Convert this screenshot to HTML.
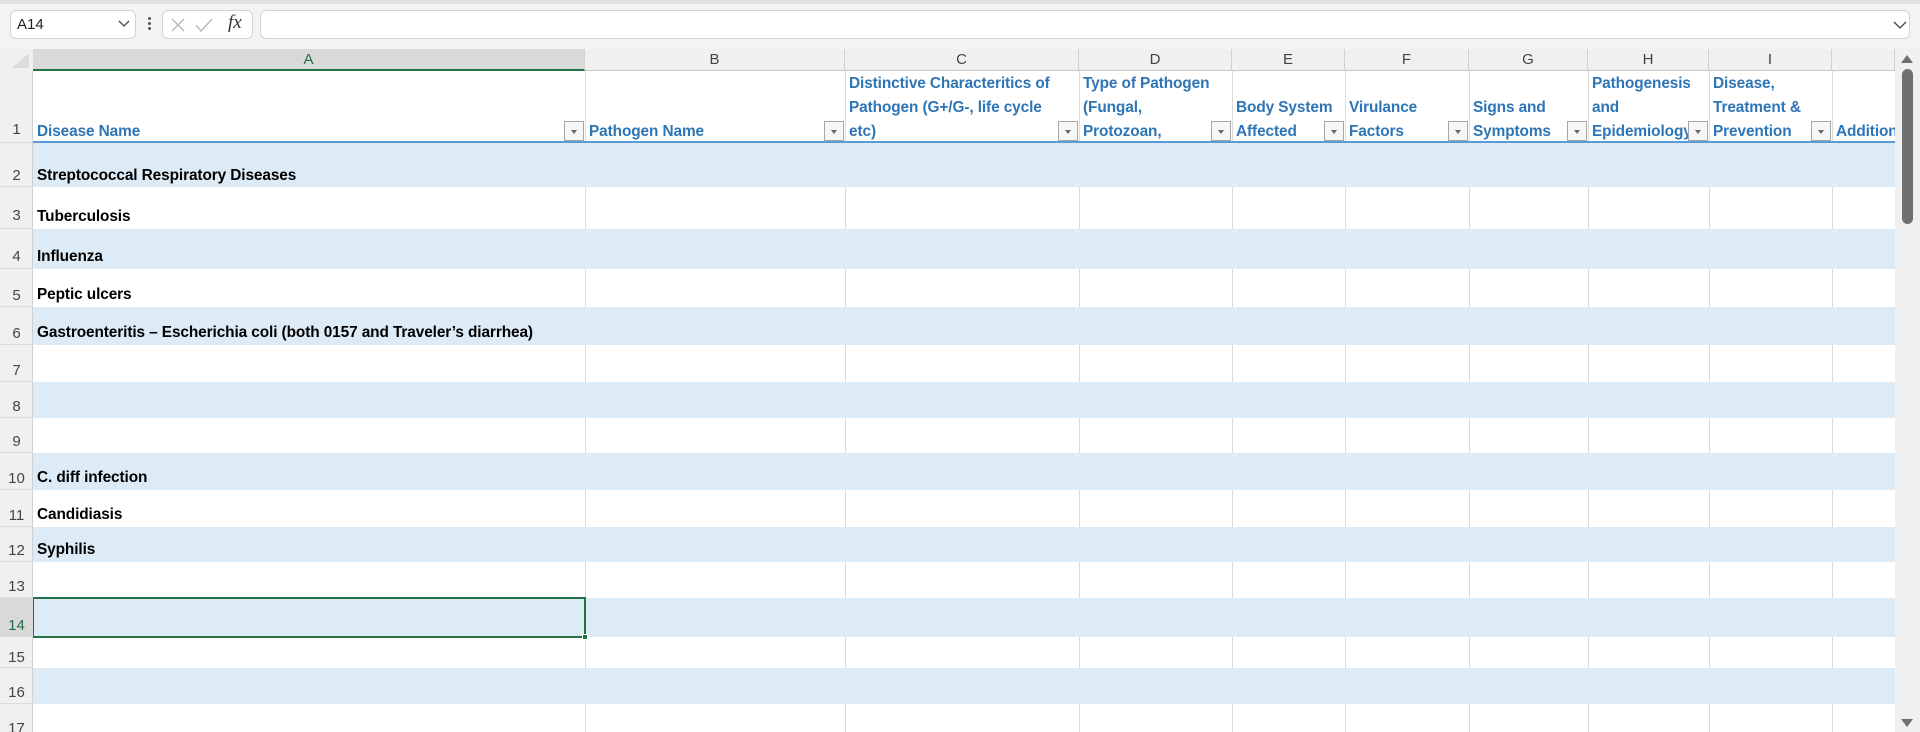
<!DOCTYPE html>
<html><head><meta charset="utf-8"><style>
*{margin:0;padding:0;box-sizing:border-box}
html,body{width:1920px;height:732px;overflow:hidden}
body{background:#f3f3f3;font-family:"Liberation Sans",sans-serif;position:relative}
.a{position:absolute}
.topline{left:0;top:0;width:1920px;height:4px;background:#e0e0e0}
.box{background:#fff;border:1px solid #d4d4d4;border-radius:6px}
.grid{left:33px;top:71px;width:1862px;height:661px;background:#fff;overflow:hidden}
.vl{position:absolute;top:0;width:1px;height:661px;background:#dadada}
.row{position:absolute;left:0;width:1862px;background:#ddebf7}
.rn{position:absolute;left:0;width:33px;text-align:center;font-size:15px;color:#444;border-bottom:1px solid #dcdcdc}
.ch{position:absolute;top:49px;height:22px;text-align:center;font-size:15px;color:#444;line-height:22px;border-right:1px solid #d0d0d0;background:#f0f0f0;border-bottom:1px solid #c6c6c6}
.t{position:absolute;left:4px;font-weight:bold;font-size:15.4px;color:#000;white-space:nowrap;letter-spacing:-0.1px}
.h{position:absolute;font-weight:bold;font-size:15.4px;color:#2e75b6;line-height:24px;white-space:nowrap;overflow:hidden;letter-spacing:-0.1px}
.f{position:absolute;width:20px;height:20px;border:1px solid #a6a6a6;background:#f7f7f7;top:50px}
.f:after{content:"";position:absolute;left:6px;top:8px;border-left:3.5px solid transparent;border-right:3.5px solid transparent;border-top:4px solid #666}
</style></head><body>
<div class="a topline"></div>
<div class="a box" style="left:10px;top:10px;width:126px;height:29px"></div>
<div class="a" style="left:17px;top:16px;font-size:15px;color:#222">A14</div>
<svg class="a" style="left:118px;top:20px" width="12" height="8"><path d="M1 1 L6 6 L11 1" stroke="#444" fill="none" stroke-width="1.3"/></svg>
<div class="a" style="left:148px;top:17px;width:3px;height:3px;background:#555;border-radius:2px;box-shadow:0 5px 0 #555,0 10px 0 #555"></div>
<div class="a box" style="left:162px;top:10px;width:91px;height:29px"></div>
<svg class="a" style="left:170px;top:17px" width="16" height="16"><path d="M2 2 L14 14 M14 2 L2 14" stroke="#b5b5b5" stroke-width="1.3"/></svg>
<svg class="a" style="left:195px;top:17px" width="18" height="16"><path d="M1 8 L6 14 L17 2" stroke="#b5b5b5" fill="none" stroke-width="1.3"/></svg>
<div class="a" style="left:228px;top:12px;font-family:'Liberation Serif',serif;font-style:italic;font-size:19px;color:#333">fx</div>
<div class="a box" style="left:260px;top:10px;width:1650px;height:29px"></div>
<svg class="a" style="left:1893px;top:21px" width="14" height="8"><path d="M1 1 L7 7 L13 1" stroke="#444" fill="none" stroke-width="1.3"/></svg>

<div class="a" style="left:0;top:49px;width:33px;height:22px;background:#f0f0f0"></div>
<svg class="a" style="left:10px;top:52px" width="20" height="17"><path d="M19 1 L19 16 L2 16 Z" fill="#dcdcdc"/></svg>
<div class="ch" style="left:33px;width:552px;background:#d9d9d9;color:#1e7145;border-bottom:2px solid #217346">A</div>
<div class="ch" style="left:585px;width:260px">B</div>
<div class="ch" style="left:845px;width:234px">C</div>
<div class="ch" style="left:1079px;width:153px">D</div>
<div class="ch" style="left:1232px;width:113px">E</div>
<div class="ch" style="left:1345px;width:124px">F</div>
<div class="ch" style="left:1469px;width:119px">G</div>
<div class="ch" style="left:1588px;width:121px">H</div>
<div class="ch" style="left:1709px;width:123px">I</div>
<div class="ch" style="left:1832px;width:63px"></div>

<div class="a grid">
<div class="vl" style="left:552px"></div><div class="vl" style="left:812px"></div><div class="vl" style="left:1046px"></div><div class="vl" style="left:1199px"></div><div class="vl" style="left:1312px"></div><div class="vl" style="left:1436px"></div><div class="vl" style="left:1555px"></div><div class="vl" style="left:1676px"></div><div class="vl" style="left:1799px"></div>
<div class="row" style="top:72px;height:44px"></div>
<div class="row" style="top:158px;height:40px"></div>
<div class="row" style="top:236px;height:38px"></div>
<div class="row" style="top:311px;height:36px"></div>
<div class="row" style="top:382px;height:37px"></div>
<div class="row" style="top:456px;height:35px"></div>
<div class="row" style="top:527px;height:39px"></div>
<div class="row" style="top:597px;height:36px"></div>
<div class="a" style="left:0;top:70px;width:1862px;height:2px;background:#5b9bd5"></div>
<div class="h" style="left:4px;top:49px">Disease Name</div>
<div class="h" style="left:556px;top:49px">Pathogen Name</div>
<div class="h" style="left:816px;top:1px;width:228px">Distinctive Characteritics of<br>Pathogen (G+/G-, life cycle<br>etc)</div>
<div class="h" style="left:1050px;top:1px;width:140px">Type of Pathogen<br>(Fungal,<br>Protozoan,</div>
<div class="h" style="left:1203px;top:25px;width:108px">Body System<br>Affected</div>
<div class="h" style="left:1316px;top:25px">Virulance<br>Factors</div>
<div class="h" style="left:1440px;top:25px">Signs and<br>Symptoms</div>
<div class="h" style="left:1559px;top:1px;width:98px">Pathogenesis<br>and<br>Epidemiology</div>
<div class="h" style="left:1680px;top:1px">Disease,<br>Treatment &amp;<br>Prevention</div>
<div class="h" style="left:1803px;top:49px;width:59px">Additional</div>
<div class="f" style="left:531px"></div><div class="f" style="left:791px"></div><div class="f" style="left:1025px"></div><div class="f" style="left:1178px"></div><div class="f" style="left:1291px"></div><div class="f" style="left:1415px"></div><div class="f" style="left:1534px"></div><div class="f" style="left:1655px"></div><div class="f" style="left:1778px"></div>
<div class="t" style="top:96px">Streptococcal Respiratory Diseases</div>
<div class="t" style="top:137px">Tuberculosis</div>
<div class="t" style="top:177px">Influenza</div>
<div class="t" style="top:215px">Peptic ulcers</div>
<div class="t" style="top:253px">Gastroenteritis – Escherichia coli (both 0157 and Traveler’s diarrhea)</div>
<div class="t" style="top:398px">C. diff infection</div>
<div class="t" style="top:435px">Candidiasis</div>
<div class="t" style="top:470px">Syphilis</div>
<div class="a" style="left:-1px;top:526px;width:554px;height:41px;border:2px solid #217346"></div>
<div class="a" style="left:549px;top:563px;width:6px;height:6px;background:#217346;border:1px solid #fff"></div>
</div>

<div class="a" style="left:0;top:71px;width:33px;height:661px;background:#f0f0f0;border-right:1px solid #d0d0d0"></div>
<div class="rn" style="top:71px;height:72px;line-height:118px">1</div>
<div class="rn" style="top:143px;height:44px;line-height:66px">2</div>
<div class="rn" style="top:187px;height:42px;line-height:58px">3</div>
<div class="rn" style="top:229px;height:40px;line-height:56px">4</div>
<div class="rn" style="top:269px;height:38px;line-height:54px">5</div>
<div class="rn" style="top:307px;height:38px;line-height:54px">6</div>
<div class="rn" style="top:345px;height:37px;line-height:52px">7</div>
<div class="rn" style="top:382px;height:36px;line-height:50px">8</div>
<div class="rn" style="top:418px;height:35px;line-height:48px">9</div>
<div class="rn" style="top:453px;height:37px;line-height:52px">10</div>
<div class="rn" style="top:490px;height:37px;line-height:52px">11</div>
<div class="rn" style="top:527px;height:35px;line-height:48px">12</div>
<div class="rn" style="top:562px;height:36px;line-height:50px">13</div>
<div class="rn" style="top:598px;height:39px;line-height:56px;background:#d9d9d9;color:#1e7145">14</div>
<div class="rn" style="top:637px;height:31px;line-height:42px">15</div>
<div class="rn" style="top:668px;height:36px;line-height:50px">16</div>
<div class="rn" style="top:704px;height:36px;line-height:50px">17</div>

<div class="a" style="left:1895px;top:49px;width:25px;height:683px;background:#f0f0f0"></div>
<svg class="a" style="left:1900px;top:54px" width="14" height="10"><path d="M7 1 L13 9 L1 9 Z" fill="#6f6f6f"/></svg>
<div class="a" style="left:1902px;top:69px;width:11px;height:155px;background:#6f6f6f;border-radius:6px"></div>
<svg class="a" style="left:1900px;top:718px" width="14" height="10"><path d="M1 1 L13 1 L7 9 Z" fill="#6f6f6f"/></svg>
</body></html>
